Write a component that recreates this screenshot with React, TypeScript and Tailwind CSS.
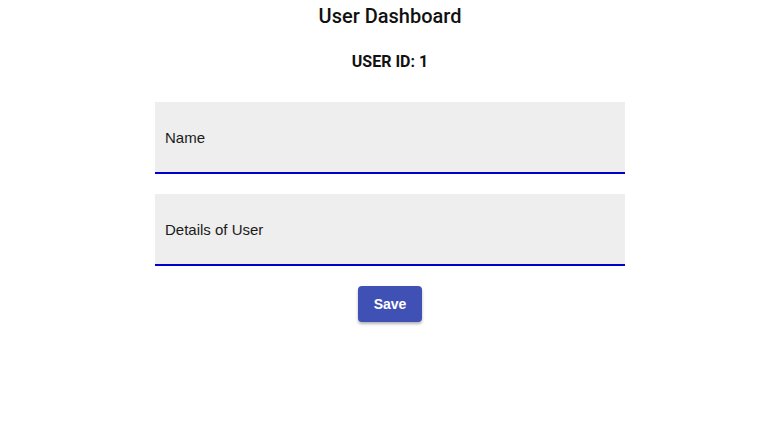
import React from "react";

export default function App() {
  return (
    <div className="min-h-screen bg-white flex flex-col items-center pl-[22px]">
      <h1 className="text-[20px] leading-[32px] font-medium text-[#111] font-['Roboto',sans-serif]">
        User Dashboard
      </h1>
      <div className="mt-[18px] text-[16px] leading-[24px] font-bold text-[#111] font-['Roboto',sans-serif]">
        USER ID: 1
      </div>
      <div className="mt-[28px] w-[470px] flex flex-col gap-[20px]">
        <div className="h-[72px] bg-[#eeeeee] border-b-2 border-[#0000cc] flex items-center px-[10px] pt-[3px]">
          <span className="text-[15px] text-[#1a1a1a] font-['Liberation_Sans',Arial,sans-serif]">Name</span>
        </div>
        <div className="h-[72px] bg-[#eeeeee] border-b-2 border-[#0000cc] flex items-center px-[10px] pt-[2px]">
          <span className="text-[15px] text-[#1a1a1a] font-['Liberation_Sans',Arial,sans-serif]">Details of User</span>
        </div>
      </div>
      <button className="mt-[20px] w-[64px] h-[36px] rounded-[4px] bg-[#3f51b5] text-white text-[14px] font-bold font-['Liberation_Sans',Arial,sans-serif] shadow-[0_2px_3px_rgba(0,0,0,0.3)]">
        Save
      </button>
    </div>
  );
}
